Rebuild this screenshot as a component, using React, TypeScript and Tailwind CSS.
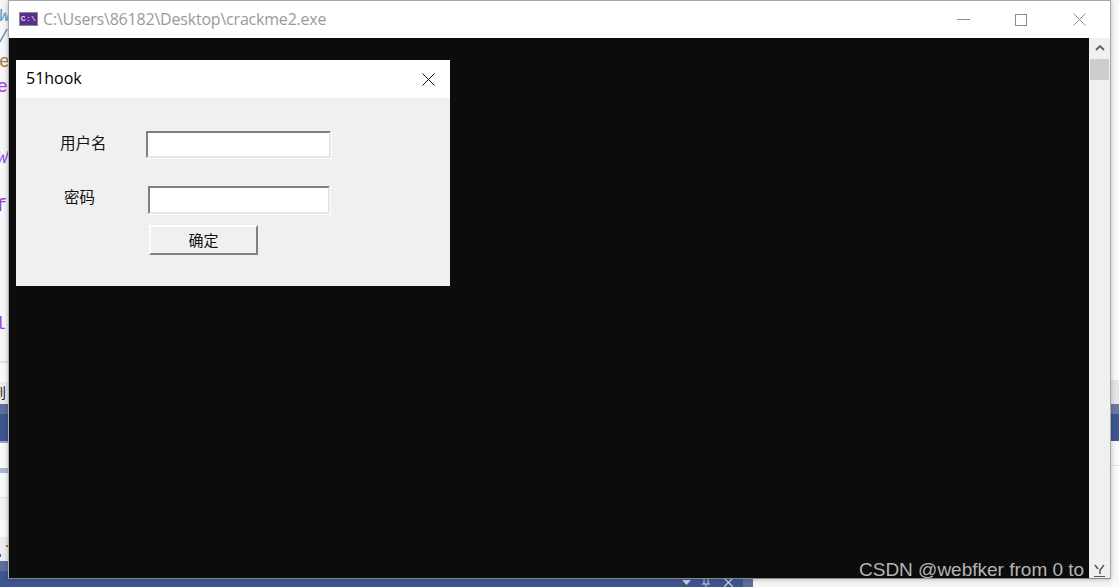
export default function App() {
  const mono = "font-['Liberation_Mono',monospace] text-[18px] leading-none";
  return (
    <div className="relative w-[1119px] h-[587px] overflow-hidden bg-[#f7f7f9] font-['Open_Sans','Noto_Sans_CJK_SC',sans-serif]">
      {/* desktop behind the console window: left edge of the editor */}
      <div className="absolute left-0 top-0 w-[9px] h-[587px] overflow-hidden flex flex-col bg-[#f7f7f9]">
        <div className="h-[361px] relative">
          <span className={`absolute left-[-1px] top-[7px] ${mono} text-[#5aa4cc] italic`}>W</span>
          <span className={`absolute left-[-2px] top-[28px] ${mono} text-[#6a93ab]`}>/</span>
          <span className={`absolute left-[-1px] top-[53px] ${mono} text-[#a87c48]`}>e</span>
          <span className={`absolute left-[-3px] top-[78px] ${mono} text-[#a040dc]`}>e</span>
          <span className={`absolute left-[-3px] top-[149px] ${mono} text-[#8f5ce8] italic`}>W</span>
          <span className={`absolute left-[-4px] top-[197px] ${mono} text-[#9040cc]`}>f</span>
          <span className={`absolute left-[-5px] top-[315px] ${mono} text-[#a040dc]`}>l</span>
        </div>
        <div className="h-[2px] bg-[#e2e2e8]" />
        <div className="h-[19px] bg-[#fafafa]" />
        <div className="h-[22px] bg-[#ececee] overflow-hidden text-[14px] leading-[22px] text-[#111]">
          <span className="block ml-[-8px]">到</span>
        </div>
        <div className="h-[10px] bg-[#5f6f9b]" />
        <div className="h-[27px] bg-[#3d5590]" />
        <div className="h-[2px] bg-[#9aa6c0]" />
        <div className="h-[25px] bg-[#fafafa]" />
        <div className="h-[5px] bg-[#aab8d0]" />
        <div className="h-[24px] bg-[#fafafa]" />
        <div className="h-[1px] bg-[#e0e0e6]" />
        <div className="h-[22px] bg-[#f2f2f2]" />
        <div className="h-[17px] bg-[#fbfbfb]" />
        <div className="h-[24px] bg-[#eeeef2] relative">
          <div className="absolute left-[6px] top-[8px] w-[3px] h-[2px] bg-[#c07020]" />
          <div className="absolute left-0 top-[17px] w-[1px] h-[3px] bg-[#2060d0]" />
        </div>
        <div className="h-[10px] bg-[#5f6f9b]" />
        <div className="h-[16px] bg-[#3d5590]" />
      </div>

      {/* desktop behind the console window: right edge */}
      <div className="absolute left-[1110px] top-0 w-[9px] h-[587px] flex flex-col bg-[#f9f9fa]">
        <div className="h-[380px]" />
        <div className="h-[24px] bg-[#e6e6ea]" />
        <div className="h-[10px] bg-[#6c7ba3]" />
        <div className="h-[27px] bg-[#3d5590]" />
        <div className="h-[24px] bg-[#fafafa]" />
        <div className="h-[1px] bg-[#dedee6]" />
      </div>

      {/* desktop behind the console window: bottom edge */}
      <div className="absolute left-[9px] top-[578px] w-[1101px] h-[9px] flex">
        <div className="w-[734px] h-full bg-[#3d5590] flex items-center justify-end pr-[9px] text-[#c8d0e0]">
          <svg width="52" height="9" viewBox="0 0 52 9" fill="none">
            <path d="M0 2h9L4.5 7z" fill="currentColor" />
            <path d="M22 0v6M26 0v6M20 6h8M24 6v3" stroke="currentColor" />
            <path d="M42 0l9 9M51 0l-9 9" stroke="currentColor" strokeWidth="1.3" />
          </svg>
        </div>
        <div className="w-[10px] h-full bg-[#5f6f9b]" />
        <div className="flex-1 h-full bg-[#f4f4f4]" />
      </div>

      {/* console window */}
      <div className="absolute left-[8px] top-0 w-[1103px] h-[579px] flex flex-col bg-white border border-[#a8a8a8] border-b-[#8a8a8a] shadow-[0_0_5px_rgba(0,0,0,0.28)]">
        <div className="h-[37px] shrink-0 flex items-center bg-white">
          <div className="ml-[10px] w-[19px] h-[14px] bg-[#5c2d91] border border-[#8a8a8a] flex items-center justify-center mt-[-1px]">
            <span className="font-['Liberation_Mono',monospace] font-bold text-[8px] leading-none text-[#dcd4ec] tracking-[0.4px]">C:\</span>
          </div>
          <span className="ml-[5px] text-[16px] leading-none text-[#9a9a9a] mt-[-1px] tracking-[-0.2px]">C:\Users\86182\Desktop\crackme2.exe</span>
          <div className="ml-auto flex items-center text-[#8c8c8c]">
            <svg className="mr-[45px]" width="13" height="1" viewBox="0 0 13 1"><path d="M0 .5h13" stroke="currentColor" /></svg>
            <svg className="mr-[46px]" width="12" height="12" viewBox="0 0 12 12" fill="none"><rect x=".5" y=".5" width="11" height="11" stroke="currentColor" /></svg>
            <svg className="mr-[24px]" width="13" height="13" viewBox="0 0 13 13" fill="none"><path d="M.5.5l12 12M12.5.5l-12 12" stroke="currentColor" /></svg>
          </div>
        </div>

        <div className="relative flex-1 min-h-0 flex">
          <div className="flex-1 bg-[#0c0c0c]" />
          <div className="w-[21px] shrink-0 bg-[#f0f0f0] flex flex-col items-center">
            <svg className="mt-[7px] text-[#606060]" width="10" height="6" viewBox="0 0 10 6" fill="none">
              <path d="M1 5l4-4 4 4" stroke="currentColor" strokeWidth="1.8" />
            </svg>
            <div className="mt-[8px] w-[19px] h-[21px] bg-[#cdcdcd]" />
            <svg className="mt-auto mb-0 text-[#555]" width="15" height="15" viewBox="0 0 15 15" fill="none">
              <path d="M3 2l3 4M12 2L8 7v4" stroke="currentColor" strokeWidth="1.5" />
              <path d="M2 13.5h11" stroke="currentColor" />
            </svg>
          </div>

          {/* watermark */}
          <span className="absolute left-[850px] top-[521px] whitespace-nowrap font-['Liberation_Sans',sans-serif] text-[19px] leading-[22px] text-[#b4b4b4]">CSDN @webfker from 0 to</span>

          {/* dialog */}
          <div className="absolute left-[7px] top-[22px] w-[434px] h-[226px] flex flex-col bg-[#f0f0f0]">
            <div className="h-[38px] shrink-0 bg-white flex items-center justify-between pl-[10px] pr-[15px]">
              <span className="text-[16px] leading-none text-black mt-[-2px]">51hook</span>
              <svg width="13" height="13" viewBox="0 0 13 13" fill="none"><path d="M.5.5l12 12M12.5.5l-12 12" stroke="#111" /></svg>
            </div>
            <div className="flex-1 flex flex-col items-start">
              <div className="mt-[33px] flex items-center">
                <span className="ml-[44px] w-[86px] text-[15.5px] leading-[24px] text-[#111] mt-[-5px]">用户名</span>
                <div className="border border-white border-l-0 border-t-0">
                  <input className="block w-[185px] h-[27px] bg-white border-2 border-t-[#808080] border-l-[#808080] border-r-[#e6e6e6] border-b-[#e6e6e6] outline-none" />
                </div>
              </div>
              <div className="mt-[27px] flex items-center">
                <span className="ml-[48px] w-[84px] text-[15.5px] leading-[24px] text-[#111] mt-[-7px]">密码</span>
                <div className="border border-white border-l-0 border-t-0">
                  <input className="block w-[182px] h-[28px] bg-white border-2 border-t-[#808080] border-l-[#808080] border-r-[#e6e6e6] border-b-[#e6e6e6] outline-none" />
                </div>
              </div>
              <button className="mt-[10px] ml-[133px] w-[109px] h-[30px] bg-[#f0f0f0] border-2 border-t-white border-l-white border-r-[#808080] border-b-[#808080] text-[15px] leading-none text-[#111] flex items-center justify-center">确定</button>
            </div>
          </div>
        </div>
      </div>
    </div>
  );
}
